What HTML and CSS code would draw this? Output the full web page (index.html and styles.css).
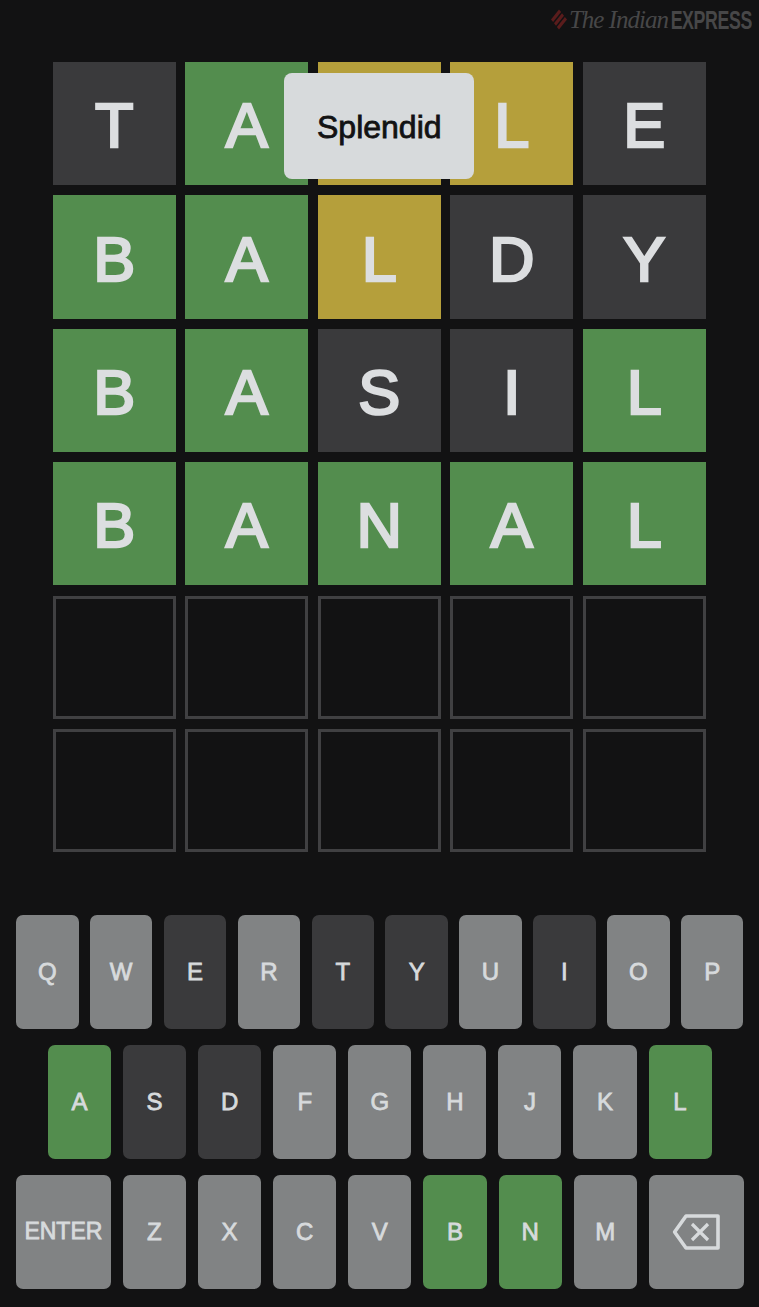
FILE: index.html
```html
<!DOCTYPE html>
<html lang="en">
<head>
    <title>Wordle</title>
    <link rel="stylesheet" href="styles.css">
</head>
<body>
    <div class="logo">
        <svg class="logo-mark" viewBox="0 0 16 20">
            <path d="M0 10L8 0L10.100 2.600L2.100 12.600Z M3 13.700L11 3.700L13 6.300L5 16.300Z M5.900 17.400L13.900 7.400L16 10L8 20Z" fill="#5a1c1c"/>
        </svg>
        <span class="logo-serif">The Indian</span>
        <span class="logo-bold">EXPRESS</span>
    </div>

    <div class="board">
        <div class="toast">Splendid</div>

        <div class="tile dark">T</div>
        <div class="tile green">A</div>
        <div class="tile yellow"></div>
        <div class="tile yellow">L</div>
        <div class="tile dark">E</div>

        <div class="tile green">B</div>
        <div class="tile green">A</div>
        <div class="tile yellow">L</div>
        <div class="tile dark">D</div>
        <div class="tile dark">Y</div>

        <div class="tile green">B</div>
        <div class="tile green">A</div>
        <div class="tile dark">S</div>
        <div class="tile dark">I</div>
        <div class="tile green">L</div>

        <div class="tile green">B</div>
        <div class="tile green">A</div>
        <div class="tile green">N</div>
        <div class="tile green">A</div>
        <div class="tile green">L</div>

        <div class="tile empty"></div>
        <div class="tile empty"></div>
        <div class="tile empty"></div>
        <div class="tile empty"></div>
        <div class="tile empty"></div>

        <div class="tile empty"></div>
        <div class="tile empty"></div>
        <div class="tile empty"></div>
        <div class="tile empty"></div>
        <div class="tile empty"></div>
    </div>

    <div class="keyboard">
        <div class="key-row row-top">
            <button class="key grey">Q</button>
            <button class="key grey">W</button>
            <button class="key dark">E</button>
            <button class="key grey">R</button>
            <button class="key dark">T</button>
            <button class="key dark">Y</button>
            <button class="key grey">U</button>
            <button class="key dark">I</button>
            <button class="key grey">O</button>
            <button class="key grey">P</button>
        </div>
        <div class="key-row row-middle">
            <button class="key green">A</button>
            <button class="key dark">S</button>
            <button class="key dark">D</button>
            <button class="key grey">F</button>
            <button class="key grey">G</button>
            <button class="key grey">H</button>
            <button class="key grey">J</button>
            <button class="key grey">K</button>
            <button class="key green">L</button>
        </div>
        <div class="key-row">
            <button class="key grey wide enter">ENTER</button>
            <button class="key grey">Z</button>
            <button class="key grey">X</button>
            <button class="key grey">C</button>
            <button class="key grey">V</button>
            <button class="key green">B</button>
            <button class="key green">N</button>
            <button class="key grey">M</button>
            <button class="key grey wide">
                <svg class="backspace" viewBox="0 0 24 18">
                    <path d="M7 1H23V17H7L1.300 9Z" fill="none" stroke="#d7dadc" stroke-width="1.800" stroke-linejoin="round"/>
                    <path d="M10 5L18 13M18 5L10 13" fill="none" stroke="#d7dadc" stroke-width="1.600"/>
                </svg>
            </button>
        </div>
    </div>
</body>
</html>
```

FILE: styles.css
```css
body {
    background-color: #121213;
    color: #dcdee0;
    margin: 0;
    height: 1307px;
    overflow: hidden;
    font-family: "Liberation Sans", Arial, sans-serif;
}
.logo {
    height: 62px;
    box-sizing: border-box;
    padding: 5px 7px 0 0;
    display: flex;
    justify-content: flex-end;
    align-items: flex-start;
    color: #474748;
}
.logo-mark {
    width: 16px;
    height: 21px;
    margin: 4px 2px 0 0;
}
.logo-serif {
    font-family: "Liberation Serif", serif;
    font-style: italic;
    font-size: 25px;
    letter-spacing: -1px;
    line-height: 30px;
    margin-right: 3px;
}
.logo-bold {
    font-family: "Liberation Sans", sans-serif;
    font-weight: bold;
    font-size: 25px;
    letter-spacing: -0.5px;
    line-height: 30px;
    width: 81px;
    display: flex;
    justify-content: flex-end;
    white-space: nowrap;
    transform: scaleX(0.71);
    transform-origin: right;
}
.board {
    position: relative;
    width: 653px;
    margin-left: 52.8px;
    display: grid;
    grid-template-columns: repeat(5, 1fr);
    grid-auto-rows: 123.3px;
    gap: 10.1px 9.5px;
}
.tile {
    display: flex;
    align-items: center;
    justify-content: center;
    padding-top: 3px;
    box-sizing: border-box;
    font-size: 63px;
    -webkit-text-stroke: 2.5px #dcdee0;
}
.tile.dark {
    background-color: #3a3a3c;
}
.tile.green {
    background-color: #538d4e;
}
.tile.yellow {
    background-color: #b59f3b;
}
.tile.empty {
    border: 3px solid #404042;
}
.toast {
    position: absolute;
    left: 231.5px;
    top: 11px;
    width: 190px;
    height: 106px;
    padding-top: 2px;
    box-sizing: border-box;
    border-radius: 8px;
    background-color: #d7dadc;
    color: #121213;
    font-size: 32px;
    -webkit-text-stroke: 0.8px #121213;
    display: flex;
    align-items: center;
    justify-content: center;
}
.keyboard {
    margin-top: 62.5px;
    padding: 0 15.5px 0 16px;
    display: flex;
    flex-direction: column;
    gap: 16px;
}
.key-row {
    display: flex;
    gap: 12px;
    height: 114px;
}
.row-top {
    gap: 11.3px;
}
.row-middle {
    padding: 0 32px;
}
.key {
    flex: 1;
    border: none;
    border-radius: 7px;
    padding: 0;
    color: #d7dadc;
    font-family: inherit;
    font-size: 24px;
    -webkit-text-stroke: 0.8px #d7dadc;
    display: flex;
    align-items: center;
    justify-content: center;
}
.key.wide {
    flex: 1.5;
}
.key.enter {
    font-size: 23px;
}
.key.grey {
    background-color: #818384;
}
.key.dark {
    background-color: #3a3a3c;
}
.key.green {
    background-color: #538d4e;
}
.backspace {
    width: 48px;
    height: 36px;
}
```
